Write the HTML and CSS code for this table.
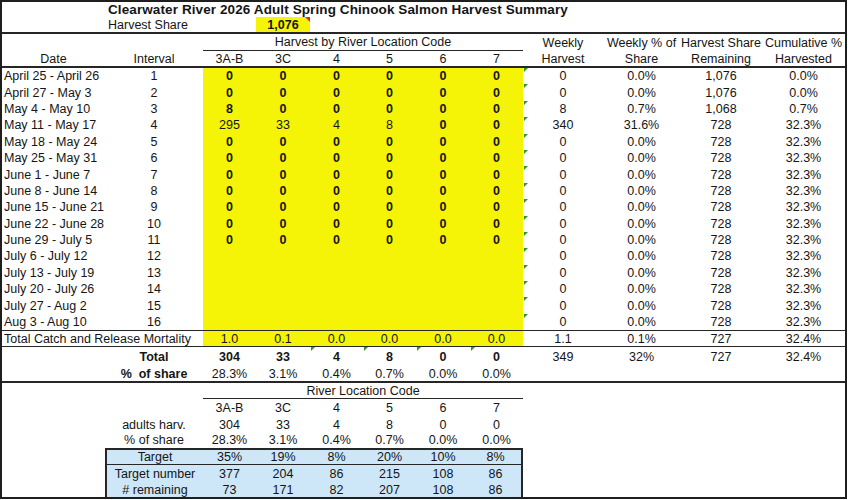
FILE: index.html
```html
<!DOCTYPE html>
<html lang="en">
<head>
<meta charset="utf-8">
<title>Clearwater River 2026 Harvest Summary</title>
<link rel="stylesheet" href="styles.css">
</head>
<body>
<div class="sheet">
<table class="grid main">
<colgroup>
<col class="w-date"><col class="w-int"><col class="w-a"><col class="w-b"><col class="w-a"><col class="w-a"><col class="w-b"><col class="w-a"><col class="w-wh"><col class="w-wp"><col class="w-hs"><col class="w-cu">
</colgroup>
<tr class="r-title"><td></td><td colspan="11" class="title">Clearwater River 2026 Adult Spring Chinook Salmon Harvest Summary</td></tr>
<tr class="r-share"><td></td><td class="l pl">Harvest Share</td><td></td><td class="y b c share"><span class="tri-r"></span>1,076</td><td colspan="8"></td></tr>
<tr class="r-h1"><td></td><td></td><td colspan="6" class="c hloc">Harvest by River Location Code</td><td class="c">Weekly</td><td class="c">Weekly % of</td><td class="c">Harvest Share</td><td class="c">Cumulative %</td></tr>
<tr class="r-h2"><td class="c">Date</td><td class="c">Interval</td><td class="c">3A-B</td><td class="c">3C</td><td class="c">4</td><td class="c">5</td><td class="c">6</td><td class="c">7</td><td class="c">Harvest</td><td class="c">Share</td><td class="c">Remaining</td><td class="c">Harvested</td></tr>

<tr class="r-d"><td class="pl">April 25 - April 26</td><td class="c">1</td><td class="y b c">0</td><td class="y b c">0</td><td class="y b c">0</td><td class="y b c">0</td><td class="y b c">0</td><td class="y b c">0</td><td class="c g"><span class="tri-g"></span>0</td><td class="c">0.0%</td><td class="c">1,076</td><td class="c">0.0%</td></tr>
<tr class="r-d"><td class="pl">April 27 - May 3</td><td class="c">2</td><td class="y b c">0</td><td class="y b c">0</td><td class="y b c">0</td><td class="y b c">0</td><td class="y b c">0</td><td class="y b c">0</td><td class="c g"><span class="tri-g"></span>0</td><td class="c">0.0%</td><td class="c">1,076</td><td class="c">0.0%</td></tr>
<tr class="r-d"><td class="pl">May 4 - May 10</td><td class="c">3</td><td class="y b c">8</td><td class="y b c">0</td><td class="y b c">0</td><td class="y b c">0</td><td class="y b c">0</td><td class="y b c">0</td><td class="c g"><span class="tri-g"></span>8</td><td class="c">0.7%</td><td class="c">1,068</td><td class="c">0.7%</td></tr>
<tr class="r-d"><td class="pl">May 11 - May 17</td><td class="c">4</td><td class="y c">295</td><td class="y c">33</td><td class="y c">4</td><td class="y c">8</td><td class="y b c">0</td><td class="y b c">0</td><td class="c g"><span class="tri-g"></span>340</td><td class="c">31.6%</td><td class="c">728</td><td class="c">32.3%</td></tr>
<tr class="r-d"><td class="pl">May 18 - May 24</td><td class="c">5</td><td class="y b c">0</td><td class="y b c">0</td><td class="y b c">0</td><td class="y b c">0</td><td class="y b c">0</td><td class="y b c">0</td><td class="c g"><span class="tri-g"></span>0</td><td class="c">0.0%</td><td class="c">728</td><td class="c">32.3%</td></tr>
<tr class="r-d"><td class="pl">May 25 - May 31</td><td class="c">6</td><td class="y b c">0</td><td class="y b c">0</td><td class="y b c">0</td><td class="y b c">0</td><td class="y b c">0</td><td class="y b c">0</td><td class="c g"><span class="tri-g"></span>0</td><td class="c">0.0%</td><td class="c">728</td><td class="c">32.3%</td></tr>
<tr class="r-d"><td class="pl">June 1 - June 7</td><td class="c">7</td><td class="y b c">0</td><td class="y b c">0</td><td class="y b c">0</td><td class="y b c">0</td><td class="y b c">0</td><td class="y b c">0</td><td class="c g"><span class="tri-g"></span>0</td><td class="c">0.0%</td><td class="c">728</td><td class="c">32.3%</td></tr>
<tr class="r-d"><td class="pl">June 8 - June 14</td><td class="c">8</td><td class="y b c">0</td><td class="y b c">0</td><td class="y b c">0</td><td class="y b c">0</td><td class="y b c">0</td><td class="y b c">0</td><td class="c g"><span class="tri-g"></span>0</td><td class="c">0.0%</td><td class="c">728</td><td class="c">32.3%</td></tr>
<tr class="r-d"><td class="pl">June 15 - June 21</td><td class="c">9</td><td class="y b c">0</td><td class="y b c">0</td><td class="y b c">0</td><td class="y b c">0</td><td class="y b c">0</td><td class="y b c">0</td><td class="c g"><span class="tri-g"></span>0</td><td class="c">0.0%</td><td class="c">728</td><td class="c">32.3%</td></tr>
<tr class="r-d"><td class="pl">June 22 - June 28</td><td class="c">10</td><td class="y b c">0</td><td class="y b c">0</td><td class="y b c">0</td><td class="y b c">0</td><td class="y b c">0</td><td class="y b c">0</td><td class="c g"><span class="tri-g"></span>0</td><td class="c">0.0%</td><td class="c">728</td><td class="c">32.3%</td></tr>
<tr class="r-d"><td class="pl">June 29 - July 5</td><td class="c">11</td><td class="y b c">0</td><td class="y b c">0</td><td class="y b c">0</td><td class="y b c">0</td><td class="y b c">0</td><td class="y b c">0</td><td class="c g"><span class="tri-g"></span>0</td><td class="c">0.0%</td><td class="c">728</td><td class="c">32.3%</td></tr>
<tr class="r-d"><td class="pl">July 6 - July 12</td><td class="c">12</td><td class="y"></td><td class="y"></td><td class="y"></td><td class="y"></td><td class="y"></td><td class="y"></td><td class="c g"><span class="tri-g"></span>0</td><td class="c">0.0%</td><td class="c">728</td><td class="c">32.3%</td></tr>
<tr class="r-d"><td class="pl">July 13 - July 19</td><td class="c">13</td><td class="y"></td><td class="y"></td><td class="y"></td><td class="y"></td><td class="y"></td><td class="y"></td><td class="c g"><span class="tri-g"></span>0</td><td class="c">0.0%</td><td class="c">728</td><td class="c">32.3%</td></tr>
<tr class="r-d"><td class="pl">July 20 - July 26</td><td class="c">14</td><td class="y"></td><td class="y"></td><td class="y"></td><td class="y"></td><td class="y"></td><td class="y"></td><td class="c g"><span class="tri-g"></span>0</td><td class="c">0.0%</td><td class="c">728</td><td class="c">32.3%</td></tr>
<tr class="r-d"><td class="pl">July 27 - Aug 2</td><td class="c">15</td><td class="y"></td><td class="y"></td><td class="y"></td><td class="y"></td><td class="y"></td><td class="y"></td><td class="c g"><span class="tri-g"></span>0</td><td class="c">0.0%</td><td class="c">728</td><td class="c">32.3%</td></tr>
<tr class="r-d"><td class="pl">Aug 3 - Aug 10</td><td class="c">16</td><td class="y"></td><td class="y"></td><td class="y"></td><td class="y"></td><td class="y"></td><td class="y"></td><td class="c g"><span class="tri-g"></span>0</td><td class="c">0.0%</td><td class="c">728</td><td class="c">32.3%</td></tr>

<tr class="r-catch"><td colspan="2" class="pl">Total Catch and Release Mortality</td><td class="y c">1.0</td><td class="y c">0.1</td><td class="y c">0.0</td><td class="y c">0.0</td><td class="y c">0.0</td><td class="y c">0.0</td><td class="c">1.1</td><td class="c">0.1%</td><td class="c">727</td><td class="c">32.4%</td></tr>
<tr class="r-tot"><td></td><td class="c b">Total</td><td class="c b">304</td><td class="c b">33</td><td class="c b g"><span class="tri-g"></span>4</td><td class="c b g"><span class="tri-g"></span>8</td><td class="c b g"><span class="tri-g"></span>0</td><td class="c b g"><span class="tri-g"></span>0</td><td class="c">349</td><td class="c">32%</td><td class="c">727</td><td class="c">32.4%</td></tr>
<tr class="r-pct"><td></td><td class="c b">%&nbsp; of share</td><td class="c">28.3%</td><td class="c">3.1%</td><td class="c">0.4%</td><td class="c">0.7%</td><td class="c">0.0%</td><td class="c">0.0%</td><td></td><td></td><td></td><td></td></tr>
</table>

<table class="grid lower">
<colgroup>
<col class="w-date"><col class="w-int"><col class="w-a"><col class="w-b"><col class="w-a"><col class="w-a"><col class="w-b"><col class="w-a"><col class="w-rest">
</colgroup>
<tr class="r-loc"><td></td><td></td><td colspan="6" class="c hloc">River Location Code</td><td></td></tr>
<tr class="r-codes"><td></td><td></td><td class="c">3A-B</td><td class="c">3C</td><td class="c">4</td><td class="c">5</td><td class="c">6</td><td class="c">7</td><td></td></tr>
<tr class="r-lo"><td></td><td class="c">adults harv.</td><td class="c">304</td><td class="c">33</td><td class="c">4</td><td class="c">8</td><td class="c">0</td><td class="c">0</td><td></td></tr>
<tr class="r-lo2"><td></td><td class="c">% of share</td><td class="c">28.3%</td><td class="c">3.1%</td><td class="c">0.4%</td><td class="c">0.7%</td><td class="c">0.0%</td><td class="c">0.0%</td><td></td></tr>
<tr class="r-box box-top"><td></td><td class="c bl bx">Target</td><td class="c bx">35%</td><td class="c bx">19%</td><td class="c bx">8%</td><td class="c bx">20%</td><td class="c bx">10%</td><td class="c bx br">8%</td><td></td></tr>
<tr class="r-box"><td></td><td class="c bl bx">Target number</td><td class="c bx">377</td><td class="c bx">204</td><td class="c bx">86</td><td class="c bx">215</td><td class="c bx">108</td><td class="c bx br">86</td><td></td></tr>
<tr class="r-box r-last"><td></td><td class="c bl bx">#&nbsp;remaining</td><td class="c bx">73</td><td class="c bx">171</td><td class="c bx">82</td><td class="c bx">207</td><td class="c bx">108</td><td class="c bx br">86</td><td></td></tr>
</table>
</div>
</body>
</html>
```

FILE: styles.css
```css
html, body {
  margin: 0;
  padding: 0;
  background: #ffffff;
}

.sheet {
  box-sizing: border-box;
  width: 847px;
  height: 499px;
  border: 2px solid #1e1e1e;
  background: #ffffff;
  font-family: "Liberation Sans", Arial, sans-serif;
  font-size: 12.5px;
  color: #151515;
  overflow: hidden;
}

.grid {
  table-layout: fixed;
  border-collapse: separate;
  border-spacing: 0;
  width: 843px;
}

.grid td {
  padding: 0;
  line-height: 14px;
  white-space: nowrap;
  overflow: visible;
  vertical-align: middle;
}

.w-date { width: 103px; }
.w-int { width: 98px; }
.w-a { width: 53px; }
.w-b { width: 54px; }
.w-wh { width: 80px; }
.w-wp { width: 77px; }
.w-hs { width: 82px; }
.w-cu { width: 83px; }
.w-rest { width: 322px; }

.c { text-align: center; }
.l { text-align: left; }
.b { font-weight: bold; }
.pl { padding-left: 2px !important; }

.y { background: #f5f306; }

.title {
  font-weight: bold;
  font-size: 13.5px;
  letter-spacing: 0.1px;
  padding-left: 3px !important;
  vertical-align: bottom !important;
}

.r-title { height: 15px; }
.r-share { height: 17px; }
.r-share td {
  border-bottom: 2px solid #262626;
  vertical-align: bottom;
}
.r-share .pl { padding-left: 3px !important; }
.share { position: relative; }

.r-h1 { height: 17px; }
.r-h1 td { vertical-align: bottom; padding-bottom: 1px; }
.hloc { border-bottom: 1px solid #262626; }
.r-h2 { height: 17px; }
.r-h2 td {
  border-bottom: 2px solid #262626;
  vertical-align: bottom;
}

.r-d { height: 16.4px; }

.r-catch { height: 17px; }
.r-catch td {
  border-top: 1px solid #262626;
  border-bottom: 1px solid #262626;
  vertical-align: bottom;
}

.r-tot { height: 17px; }
.r-tot td { vertical-align: bottom; }
.r-pct { height: 19px; }
.r-pct td {
  border-bottom: 2px solid #262626;
  vertical-align: bottom;
}

.g { position: relative; }

.tri-g {
  position: absolute;
  top: 0;
  left: 1px;
  width: 0;
  height: 0;
  border-top: 4px solid #2f9a2a;
  border-right: 4px solid transparent;
}

.tri-r {
  position: absolute;
  top: 0;
  right: 0;
  width: 0;
  height: 0;
  border-top: 5px solid #e0281e;
  border-left: 5px solid transparent;
}

.r-loc { height: 16px; }
.r-loc td { vertical-align: bottom; }
.r-codes { height: 17px; }
.r-lo { height: 16.5px; }
.r-lo2 { height: 15px; }
.r-box { height: 16.5px; }
.r-box td { vertical-align: bottom; }
.box-top { height: 17px; }
.r-last { height: 15.5px; }

.bx { background: #cde6f8; }
.box-top td.bx {
  border-top: 2px solid #262626;
  border-bottom: 1px solid #262626;
}
.bl { border-left: 2px solid #262626; }
.br { border-right: 2px solid #262626; }
```
